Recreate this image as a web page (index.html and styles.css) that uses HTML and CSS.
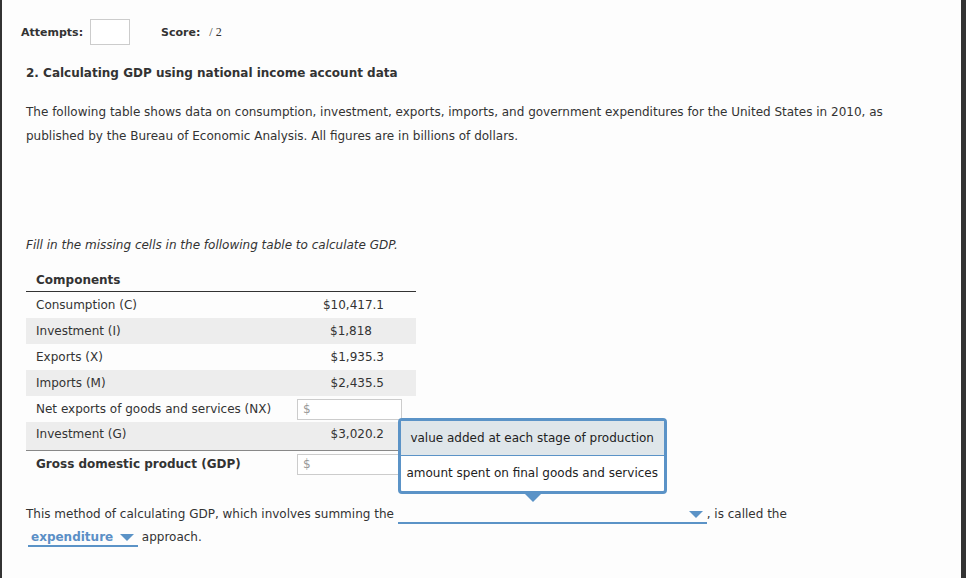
FILE: index.html
```html
<!DOCTYPE html>
<html>
<head>
<meta charset="utf-8">
<link rel="stylesheet" href="styles.css">
</head>
<body>
<div class="frame">
  <div class="topbar">
    <span class="lbl">Attempts:</span>
    <span class="attempt-box"></span>
    <span class="lbl score">Score:</span>
    <span class="score-val">/ 2</span>
  </div>
  <div class="main">
    <h2 class="title">2. Calculating GDP using national income account data</h2>
    <p class="intro">The following table shows data on consumption, investment, exports, imports, and government expenditures for the United States in 2010, as published by the Bureau of Economic Analysis. All figures are in billions of dollars.</p>
    <p class="instr">Fill in the missing cells in the following table to calculate GDP.</p>
    <table class="gdp">
      <thead>
        <tr><th class="c-label">Components</th><th class="c-val"></th></tr>
      </thead>
      <tbody>
        <tr><td class="c-label">Consumption (C)</td><td class="c-val">$10,417.1</td></tr>
        <tr class="alt"><td class="c-label">Investment (I)</td><td class="c-val"><span class="int">$1,818</span></td></tr>
        <tr><td class="c-label">Exports (X)</td><td class="c-val">$1,935.3</td></tr>
        <tr class="alt"><td class="c-label">Imports (M)</td><td class="c-val">$2,435.5</td></tr>
        <tr><td class="c-label">Net exports of goods and services (NX)</td><td class="c-input"><span class="money-input">$</span></td></tr>
        <tr class="alt tall"><td class="c-label">Investment (G)</td><td class="c-val">$3,020.2</td></tr>
        <tr class="total"><td class="c-label">Gross domestic product (GDP)</td><td class="c-input"><span class="money-input">$</span></td></tr>
      </tbody>
    </table>
    <p class="sentence">This method of calculating GDP, which involves summing the <span class="dd dd-wide"><span class="dd-text">&nbsp;</span><span class="caret"></span><span class="menu"><span class="opt opt-hl">value added at each stage of production</span><span class="opt opt-last">amount spent on final goods and services</span></span></span>, is called the<br><span class="dd dd-small"><span class="dd-text">expenditure</span><span class="caret"></span></span> approach.</p>
  </div>
</div>
</body>
</html>
```

FILE: styles.css
```css
html, body {
  margin: 0;
  padding: 0;
  background: #fff;
}
.frame {
  box-sizing: border-box;
  width: 966px;
  height: 578px;
  border-left: 2px solid #333;
  border-right: 5px solid #333;
  background: #fdfdfd;
  font-family: "DejaVu Sans", Verdana, sans-serif;
  color: #333;
  overflow: hidden;
}
.topbar {
  display: flex;
  align-items: center;
  padding: 19px 0 0 19px;
  height: 26px;
  font-size: 11px;
}
.lbl {
  font-weight: bold;
  color: #333;
}
.attempt-box {
  display: inline-block;
  width: 38px;
  height: 24px;
  border: 1px solid #ccc;
  background: #fff;
  margin-left: 7px;
}
.score {
  margin-left: 31px;
}
.score-val {
  font-family: "Liberation Serif", serif;
  font-size: 12px;
  margin-left: 9px;
}
.main {
  padding-left: 24px;
}
.title {
  font-size: 12px;
  font-weight: bold;
  margin: 20px 0 0 0;
  line-height: 16px;
}
.intro {
  font-size: 12px;
  line-height: 24px;
  margin: 19px 0 0 0;
  width: 880px;
}
.instr {
  font-style: italic;
  font-size: 12px;
  margin: 89px 0 0 0;
  line-height: 16px;
}
.gdp {
  border-collapse: collapse;
  width: 390px;
  margin-top: 19px;
  font-size: 12px;
}
.gdp th, .gdp td {
  padding: 0;
  height: 26px;
}
.gdp th {
  text-align: left;
  font-weight: bold;
  border-bottom: 1px solid #333;
  height: 19px;
  line-height: 16px;
  vertical-align: top;
}
.c-label {
  padding-left: 10px !important;
  width: 261px;
  text-align: left;
}
.c-val {
  text-align: right;
  padding-right: 32px !important;
}
.int {
  padding-right: 12px;
}
.alt td {
  background: #ededed;
}
.tall td {
  height: 28px;
  vertical-align: top;
  line-height: 24px;
}
.total td {
  border-top: 1px solid #888;
  font-weight: bold;
}
.c-input {
  padding-left: 0;
}
.money-input {
  display: block;
  box-sizing: border-box;
  width: 105px;
  height: 21px;
  border: 1px solid #ccc;
  background: #fff;
  color: #999;
  font-size: 12px;
  font-weight: normal;
  line-height: 19px;
  padding-left: 5px;
}
.sentence {
  font-size: 12px;
  line-height: 23px;
  margin: 26px 0 0 0;
}
.dd {
  position: relative;
  display: inline-block;
  vertical-align: baseline;
  border-bottom: 2px solid #5b93c7;
  height: 15px;
  line-height: 15px;
}
.dd-wide {
  width: 309px;
}
.dd-small {
  width: 110px;
  margin-left: 2px;
}
.dd-text {
  color: #5b8fc6;
  font-weight: bold;
  padding-left: 3px;
}
.caret {
  position: absolute;
  right: 4px;
  top: 4px;
  width: 0;
  height: 0;
  border-left: 7px solid transparent;
  border-right: 7px solid transparent;
  border-top: 7px solid #5b93c7;
}
.menu {
  position: absolute;
  left: 0;
  bottom: 28px;
  width: 269px;
  box-sizing: border-box;
  border: 3px solid #5b93c7;
  border-radius: 4px;
  background: #fff;
  display: flex;
  flex-direction: column;
  line-height: 16px;
}
.menu::after {
  content: "";
  position: absolute;
  left: 124px;
  bottom: -11px;
  border-left: 8px solid transparent;
  border-right: 8px solid transparent;
  border-top: 8px solid #5b93c7;
}
.opt {
  display: block;
  text-align: center;
  height: 34px;
  line-height: 34px;
  white-space: nowrap;
  color: #222;
  font-weight: normal;
}
.opt-last {
  height: 35px;
  line-height: 35px;
}
.opt-hl {
  background: #dfe6ea;
  border-bottom: 1px solid #5b93c7;
}
```
